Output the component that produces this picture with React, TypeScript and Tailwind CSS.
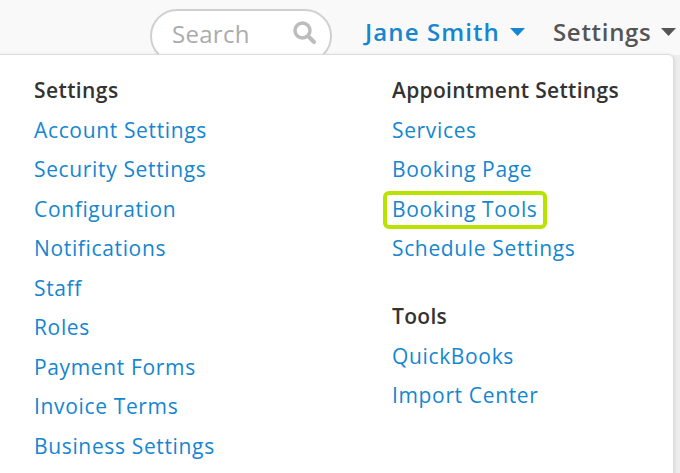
import React from 'react';

const settingsLinks = [
  'Account Settings',
  'Security Settings',
  'Configuration',
  'Notifications',
  'Staff',
  'Roles',
  'Payment Forms',
  'Invoice Terms',
  'Business Settings',
];

const appointmentLinks = ['Services', 'Booking Page', 'Booking Tools', 'Schedule Settings'];
const toolLinks = ['QuickBooks', 'Import Center'];

const Caret = ({ className }: { className: string }) => (
  <svg width="15" height="8" viewBox="0 0 15 8" className={className}>
    <path d="M0 0h15L7.5 8z" fill="currentColor" />
  </svg>
);

const MenuLink = ({ label, active }: { label: string; active?: boolean }) => (
  <a href="#" className="relative block w-fit text-[#1586cf] hover:underline">
    {label}
    {active && (
      <span className="absolute -left-[9px] -right-[9px] top-[1.5px] bottom-0 rounded-[6px] border-[4px] border-[#b8e300]" />
    )}
  </a>
);

export default function App() {
  return (
    <div
      className="w-[680px] h-[473px] overflow-hidden bg-[#ededed]"
      style={{ fontFamily: '"Open Sans", "Liberation Sans", sans-serif' }}
    >
      {/* Top bar */}
      <div className="h-[55px] bg-[#f9f9f9] flex items-start pt-[9px] pl-[150px]">
        <div className="h-[54px] w-[182px] shrink-0 rounded-full border-2 border-[#cfcfcf] bg-white flex items-start pt-[5px] pl-[20px] pr-[12px] justify-between">
          <span className="text-[24px] tracking-[0.3px] text-[#ababab]">Search</span>
          <svg width="26" height="26" viewBox="0 0 26 26" className="mt-[4px]">
            <circle cx="10.5" cy="10.5" r="7.5" fill="none" stroke="#bcbcbc" strokeWidth="3.5" />
            <path d="M16 16l6 6" stroke="#bcbcbc" strokeWidth="4" strokeLinecap="round" />
          </svg>
        </div>
        <div className="ml-[33px] flex items-center gap-[10px] pt-[5px]">
          <span className="text-[24px] font-semibold tracking-[1.1px] text-[#1586cf]">Jane Smith</span>
          <Caret className="text-[#1586cf]" />
        </div>
        <div className="ml-[28px] flex items-center gap-[10px] pt-[5px]">
          <span className="text-[24px] font-semibold tracking-[0.7px] text-[#555]">Settings</span>
          <Caret className="text-[#555]" />
        </div>
      </div>

      {/* Dropdown panel */}
      <div className="relative z-10 -mt-[1px] -ml-[4px] w-[678px] h-[430px] bg-white border border-[#dcdcdc] rounded-tr-[6px] shadow-[0_1px_4px_rgba(0,0,0,0.12)] flex pt-[16px] text-[21px] tracking-[0.65px] leading-[39.5px]">
        <div className="pl-[37px] w-[395px] shrink-0">
          <div className="font-semibold tracking-[0.4px] text-[#333]">Settings</div>
          {settingsLinks.map((l) => (
            <MenuLink key={l} label={l} />
          ))}
        </div>
        <div>
          <div className="font-semibold tracking-[0.3px] text-[#333]">Appointment Settings</div>
          {appointmentLinks.map((l) => (
            <MenuLink key={l} label={l} active={l === 'Booking Tools'} />
          ))}
          <div className="mt-[28.5px] font-semibold tracking-[0.3px] text-[#333]">Tools</div>
          {toolLinks.map((l) => (
            <MenuLink key={l} label={l} />
          ))}
        </div>
      </div>
    </div>
  );
}
